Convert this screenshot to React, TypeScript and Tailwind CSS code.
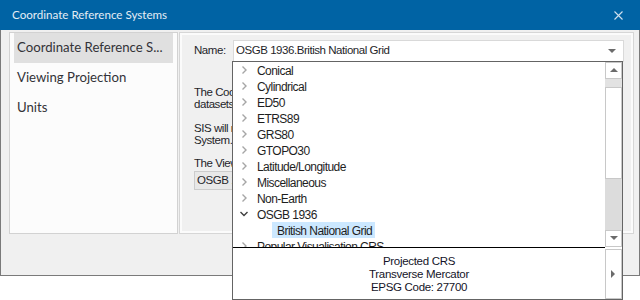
import React from "react";

const narrow = { fontFamily: "'Liberation Sans', Arial, sans-serif" };
const ui = { fontFamily: "Lato, 'Noto Sans', sans-serif" };

const nodes = [
    "Conical",
    "Cylindrical",
    "ED50",
    "ETRS89",
    "GRS80",
    "GTOPO30",
    "Latitude/Longitude",
    "Miscellaneous",
    "Non-Earth",
];

function Chevron({ open }: { open?: boolean }) {
    if (open) {
        return (
            <svg width="12" height="12" viewBox="0 0 12 12" className="ml-[5px]">
                <polyline points="2.5,4 6,7.5 9.5,4" fill="none" stroke="#404040" strokeWidth="1.4" />
            </svg>
        );
    }
    return (
        <svg width="12" height="12" viewBox="0 0 12 12" className="ml-[5px]">
            <polyline points="4.5,2.5 8,6 4.5,9.5" fill="none" stroke="#a6a6a6" strokeWidth="1.4" />
        </svg>
    );
}

function TreeRow({ label, open }: { label: string; open?: boolean }) {
    return (
        <div className="h-[16px] flex items-center whitespace-nowrap text-[12px] tracking-[-0.55px] text-[#1e1e1e]">
            <div className="w-[24px] flex items-center">
                <Chevron open={open} />
            </div>
            <span className="pt-px">{label}</span>
        </div>
    );
}

function Arrow({ dir }: { dir: "up" | "down" | "right" }) {
    const pts = dir === "up" ? "0,4 4,0 8,4" : dir === "down" ? "0,0 8,0 4,4" : "0,0 4,4 0,8";
    const w = dir === "right" ? 5 : 8;
    const h = dir === "right" ? 8 : 5;
    return (
        <svg width={w} height={h} viewBox={`0 0 ${w} ${h}`}>
            <polygon points={pts} fill="#6b6b6b" />
        </svg>
    );
}

export default function App() {
    return (
        <div className="relative w-[640px] h-[300px] bg-white overflow-hidden">
            {/* window */}
            <div className="w-[640px] h-[276px] flex flex-col bg-[#f0f0f0]">
                <div className="h-[30px] bg-[#0063a4] flex items-center justify-between pl-3 pr-[17px]">
                    <span style={ui} className="text-[11.6px] text-[#e4edf5]">Coordinate Reference Systems</span>
                    <svg width="9" height="9" viewBox="0 0 9 9">
                        <path d="M0.5 0.5 L8.5 8.5 M8.5 0.5 L0.5 8.5" stroke="#cfe0ee" strokeWidth="1.1" />
                    </svg>
                </div>
                <div className="flex-1 flex border-x border-b border-[#7a7a7a] pl-2 pt-[2px]">
                    {/* left nav */}
                    <div style={ui} className="w-[169px] h-[202px] border border-[#d2d2d2] bg-[#fcfcfc] px-1 text-[13.2px] text-[#333338] whitespace-nowrap">
                        <div className="h-[30px] flex items-center pl-[3px] bg-[#e0e0e0]">Coordinate Reference S...</div>
                        <div className="h-[30px] flex items-center pl-[3px]">Viewing Projection</div>
                        <div className="h-[30px] flex items-center pl-[3px]">Units</div>
                    </div>
                    {/* right panel */}
                    <div
                        style={narrow}
                        className="ml-[1px] w-[455px] h-[202px] overflow-hidden border border-[#d6d6d6] shadow-[inset_0_0_0_2px_#fbfbfb] pl-[14px] pt-[7px] text-[11.5px] tracking-[-0.45px] text-[#1f1f2a] whitespace-nowrap"
                    >
                        <div className="flex items-center h-[22px]">
                            <span className="w-[39px]">Name:</span>
                            <div className="w-[391px] h-[22px] bg-white border border-[#d9d9d9] flex items-center justify-between pl-[2px] pr-[7px]">
                                <span>OSGB 1936.British National Grid</span>
                                <Arrow dir="down" />
                            </div>
                        </div>
                        <p className="mt-[24px] leading-[12px]">
                            The Coordinate Reference System defines how coordinates are stored for new
                            <br />
                            datasets created in this map.
                        </p>
                        <p className="mt-[12px] leading-[12px]">
                            SIS will re-project data as required into the Viewing Projection of the Coordinate
                            <br />
                            System.
                        </p>
                        <p className="mt-[11px] leading-[12px]">The Viewing Projection is:</p>
                        <div className="mt-[2px] w-[300px] h-[19px] bg-[#e8e8e8] border border-[#cccccc] flex items-center pl-[2px]">
                            OSGB 1936.British National Grid
                        </div>
                    </div>
                </div>
            </div>

            {/* dropdown popup */}
            <div
                style={narrow}
                className="absolute left-[232px] top-[61px] w-[391px] h-[239px] bg-white border border-[#646464] flex flex-col"
            >
                <div className="h-[185px] flex">
                    <div className="flex-1 overflow-hidden">
                        {nodes.map((n) => (
                            <TreeRow key={n} label={n} />
                        ))}
                        <TreeRow label="OSGB 1936" open />
                        <div className="h-[16px] flex items-center pl-[39px]">
                            <span className="h-[16px] bg-[#cce8ff] pl-[5px] pr-[3px] pt-px flex items-center whitespace-nowrap text-[12px] tracking-[-0.55px] text-[#1e1e1e]">
                                British National Grid
                            </span>
                        </div>
                        <TreeRow label="Popular Visualisation CRS" />
                    </div>
                    <div className="w-[17px] flex flex-col bg-[#dcdcdc]">
                        <div className="h-[17px] bg-white border border-[#c8c8c8] flex items-center justify-center">
                            <Arrow dir="up" />
                        </div>
                        <div className="h-[8px] bg-[#e2e2e2]" />
                        <div className="h-[92px] bg-white border border-[#c8c8c8]" />
                        <div className="flex-1" />
                        <div className="h-[17px] bg-white border border-[#c8c8c8] flex items-center justify-center">
                            <Arrow dir="down" />
                        </div>
                    </div>
                </div>
                <div className="h-[2px] flex">
                    <div className="flex-1 h-px bg-black" />
                    <div className="w-[17px]" />
                </div>
                <div className="flex-1 flex">
                    <div className="flex-1 flex flex-col items-center justify-center whitespace-nowrap text-[11.5px] tracking-[-0.3px] leading-[13px] text-[#141428]">
                        <span>Projected CRS</span>
                        <span>Transverse Mercator</span>
                        <span>EPSG Code: 27700</span>
                    </div>
                    <div className="w-[17px] bg-white border border-[#c8c8c8] flex items-center justify-center">
                        <Arrow dir="right" />
                    </div>
                </div>
            </div>
        </div>
    );
}
